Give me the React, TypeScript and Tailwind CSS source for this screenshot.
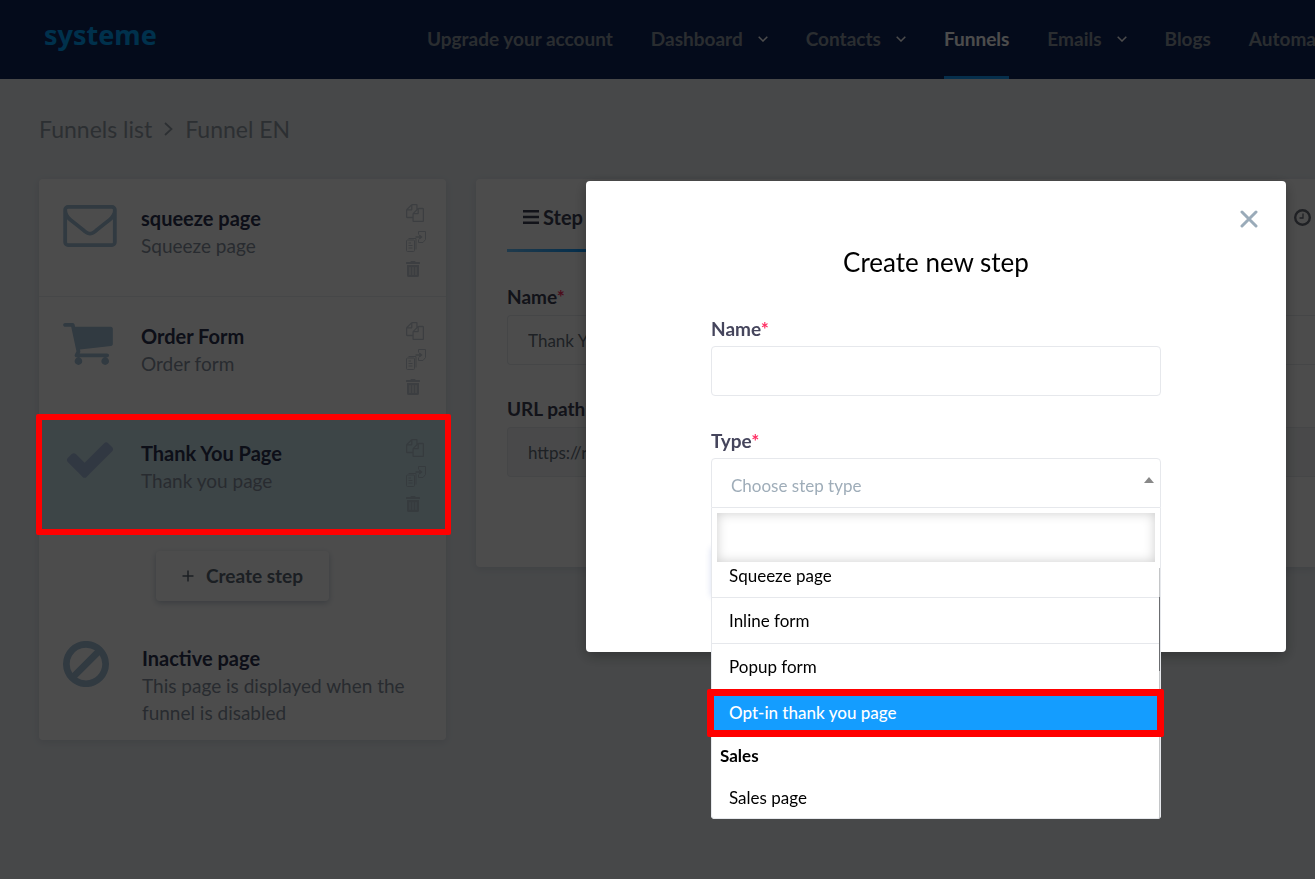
import { useState } from "react";
import { FaTrashAlt } from "react-icons/fa";

type StepIconName = "envelope" | "cart" | "check" | "ban";

interface FunnelStep {
  title: string;
  type: string;
  icon: StepIconName;
  selected?: boolean;
  divider?: boolean;
}

const NAV_ITEMS = [
  { label: "Upgrade your account" },
  { label: "Dashboard", menu: true },
  { label: "Contacts", menu: true },
  { label: "Funnels", active: true },
  { label: "Emails", menu: true },
  { label: "Blogs" },
  { label: "Automations" },
];

const STEPS: FunnelStep[] = [
  { title: "squeeze page", type: "Squeeze page", icon: "envelope", divider: true },
  { title: "Order Form", type: "Order form", icon: "cart" },
  { title: "Thank You Page", type: "Thank you page", icon: "check", selected: true },
];

const STEP_ICONS: Record<StepIconName, { viewBox: string; className: string; d: string }> = {
  envelope: {
    viewBox: "0 256 1792 1408",
    className: "h-[42px] w-[54px]",
    d: "M1664 1504v-768q-32 36-69 66-268 206-426 338-51 43-83 67t-86.5 48.5-102.5 24.5h-2q-48 0-102.5-24.5t-86.5-48.5-83-67q-158-132-426-338-37-30-69-66v768q0 13 9.5 22.5t22.5 9.5h1472q13 0 22.5-9.5t9.5-22.5zm0-1051v-24.5l-.5-13-3-12.5-5.5-9-9-7.5-14-2.5h-1472q-13 0-22.5 9.5t-9.5 22.5q0 168 147 284 193 152 401 317 6 5 35 29.5t46 37.5 44.5 31.5 50.5 27.5 43 9h2q20 0 43-9t50.5-27.5 44.5-31.5 46-37.5 35-29.5q208-165 401-317 54-43 100.5-115.5t46.5-131.5zm128-37v1088q0 66-47 113t-113 47h-1472q-66 0-113-47t-47-113v-1088q0-66 47-113t113-47h1472q66 0 113 47t47 113z",
  },
  cart: {
    viewBox: "64 256 1664 1408",
    className: "h-[42px] w-[50px]",
    d: "M704 1536q0 52-38 90t-90 38-90-38-38-90 38-90 90-38 90 38 38 90zm896 0q0 52-38 90t-90 38-90-38-38-90 38-90 90-38 90 38 38 90zm128-1088v512q0 24-16.5 42.5t-40.5 21.5l-1044 122q13 60 13 70 0 16-24 64h920q26 0 45 19t19 45-19 45-45 19h-1024q-26 0-45-19t-19-45q0-11 8-31.5t16-36 21.5-40 15.5-29.5l-177-823h-204q-26 0-45-19t-19-45 19-45 45-19h256q16 0 28.5 6.5t19.5 15.5 13 24.5 8 26 5.5 29.5 4.5 26h1201q26 0 45 19t19 45z",
  },
  check: {
    viewBox: "0 256 1792 1408",
    className: "h-[42px] w-[54px]",
    d: "M1671 566q0 40-28 68l-724 724-136 136q-28 28-68 28t-68-28l-136-136-362-362q-28-28-28-68t28-68l136-136q28-28 68-28t68 28l294 295 656-657q28-28 68-28t68 28l136 136q28 28 28 68z",
  },
  ban: {
    viewBox: "128 125 1536 1536",
    className: "h-[46px] w-[46px]",
    d: "M1440 893q0-161-87-295l-754 753q137 89 297 89 111 0 211.5-43.5t173.5-116.5 116-174.5 43-212.5zm-999 299l755-754q-135-91-300-91-148 0-273 73t-198 199-73 274q0 162 89 299zm1223-299q0 157-61 300t-163.5 246-245 164-298.5 61-298.5-61-245-164-163.5-246-61-300 61-299.5 163.5-245.5 245-164 298.5-61 298.5 61 245 164 163.5 245.5 61 299.5z",
  },
};

function StepIcon({ name }: { name: StepIconName }) {
  const icon = STEP_ICONS[name];
  return (
    <svg viewBox={icon.viewBox} className={icon.className} fill="currentColor" aria-hidden="true">
      <path d={icon.d} />
    </svg>
  );
}

function CopyIcon() {
  return (
    <svg viewBox="0 0 1792 1792" className="h-[18px] w-[18px]" fill="currentColor" aria-hidden="true">
      <path d="M1696 384q40 0 68 28t28 68v1216q0 40-28 68t-68 28h-960q-40 0-68-28t-28-68v-288h-544q-40 0-68-28t-28-68v-672q0-40 20-88t48-76l408-408q28-28 76-48t88-20h416q40 0 68 28t28 68v328q68-40 128-40h416zm-544 213l-299 299h299v-299zm-640-384l-299 299h299v-299zm196 647l316-316v-416h-384v416q0 40-28 68t-68 28h-416v640h512v-256q0-40 20-88t48-76zm956 804v-1152h-384v416q0 40-28 68t-68 28h-416v640h896z" />
    </svg>
  );
}

function MoveIcon() {
  return (
    <svg viewBox="0 0 20 21" className="h-[21px] w-5" fill="none" stroke="currentColor" aria-hidden="true">
      <path d="M12.5 3.5v-3h7v8l-2.500 3h-4.500v-3" />
      <path d="M9.500 6h5.500M13.200 4l2.300 2-2.300 2" strokeWidth="1.500" />
      <rect x=".5" y="9" width="8" height="11.500" rx="1" />
      <path d="M2.500 7.500h7.500v11M2.500 12h2.500M2.500 14.500h4M2.500 17h4" />
    </svg>
  );
}

function ChevronDown() {
  return (
    <svg viewBox="0 0 10 6" className="h-1.5 w-2.5" fill="none" stroke="currentColor" strokeWidth="1.5" aria-hidden="true">
      <path d="M.7.7 5 5 9.300.7" />
    </svg>
  );
}

function Required() {
  return <span className="text-[#ff2e63]">*</span>;
}

function Header() {
  return (
    <header className="flex h-[79px] items-stretch bg-[#10265c] pl-11">
      <a href="#home" className="w-[383px] shrink-0 pt-[17px] font-['Noto_Sans',sans-serif] text-[27px] leading-9 font-bold text-[#00a4ff]">
        systeme
      </a>
      <nav className="flex shrink-0 gap-[38px] text-[19px] font-bold whitespace-nowrap text-[#8d98a0]">
        {NAV_ITEMS.map((item) => (
          <a
            key={item.label}
            href="#nav"
            className={`flex items-center border-b-[3px] pt-0.5 ${item.active ? "border-[#149dff] text-white" : "border-transparent"}`}
          >
            {item.label}
            {item.menu ? (
              <span className="ml-[15px] text-white">
                <ChevronDown />
              </span>
            ) : null}
          </a>
        ))}
      </nav>
    </header>
  );
}

function StepRow({ step }: { step: FunnelStep }) {
  return (
    <li className={`relative ${step.divider ? "border-b border-[#e9edf2]" : ""} ${step.selected ? "bg-[#cde6ef]" : ""}`}>
      <div className="flex h-[117px] pt-[26px] pr-5 pl-6">
        <div className={`w-[78px] shrink-0 ${step.selected ? "text-[#a6bcdc]" : "text-[#a3c1d9]"}`}>
          <StepIcon name={step.icon} />
        </div>
        <div className="flex-1 leading-[27px]">
          <h2 className="text-[20px] font-bold text-[#2c3250]">{step.title}</h2>
          <p className="text-[19px] text-[#8892a0]">{step.type}</p>
        </div>
        <div className={`-mt-px flex w-5 flex-col items-start gap-[9px] ${step.selected ? "text-[#b4c5cf]" : "text-[#cad1d9]"}`}>
          <button type="button" aria-label={`Duplicate ${step.title}`}>
            <CopyIcon />
          </button>
          <button type="button" aria-label={`Move ${step.title}`}>
            <MoveIcon />
          </button>
          <button type="button" aria-label={`Delete ${step.title}`}>
            <FaTrashAlt className="h-4 w-3.5" />
          </button>
        </div>
      </div>
      {step.selected ? (
        <span className="pointer-events-none absolute top-0 -right-[5px] -bottom-1 -left-[3px] z-30 rounded-xs border-6 border-[#ff0000]" />
      ) : null}
    </li>
  );
}

function StepsPanel() {
  return (
    <aside className="w-[407px] shrink-0 self-start rounded bg-white pb-[14px] shadow-[0_2px_8px_rgba(60,90,130,0.15)]">
      <ul>
        {STEPS.map((step) => (
          <StepRow key={step.title} step={step} />
        ))}
      </ul>
      <div className="flex justify-center pt-5 pb-10">
        <button
          type="button"
          className="flex h-[50px] w-[173px] items-center justify-center gap-3 rounded text-[19px] font-bold text-[#5c6976] shadow-[0_2px_6px_rgba(50,80,120,0.3)]"
        >
          <svg viewBox="0 0 12 12" className="h-3 w-3" stroke="currentColor" strokeWidth="1.5" aria-hidden="true">
            <path d="M6 .5v11M.5 6h11" />
          </svg>
          Create step
        </button>
      </div>
      <div className="flex px-6">
        <div className="w-[79px] shrink-0 text-[#a3c1d9]">
          <StepIcon name="ban" />
        </div>
        <div className="pt-1 leading-[27px]">
          <h2 className="text-[20px] font-bold text-[#2c3250]">Inactive page</h2>
          <p className="text-[19px] text-[#8892a0]">This page is displayed when the funnel is disabled</p>
        </div>
      </div>
    </aside>
  );
}

function StepSettings() {
  return (
    <section className="h-[388px] flex-1 rounded-l bg-white pl-[31px] shadow-[0_2px_8px_rgba(60,90,130,0.15)]">
      <div className="flex h-[73px] items-stretch justify-between text-[20px] font-bold text-[#3c4156]">
        <button
          type="button"
          className="flex w-60 items-center gap-1 border-b-[3px] pt-[6px] pl-4 [border-image:linear-gradient(90deg,#6cc4ff,#149dff_30%)_1]"
        >
          <svg viewBox="0 0 16 14" className="h-3.5 w-4" fill="currentColor" aria-hidden="true">
            <path d="M0 0h16v2.500H0zM0 5.700h16v2.500H0zM0 11.400h16v2.500H0z" />
          </svg>
          Step
        </button>
        <button type="button" aria-label="Deadline" className="pt-[3px] pr-1 text-[#6a6e7a]">
          <svg viewBox="0 0 17 17" className="h-[17px] w-[17px]" fill="none" stroke="currentColor" aria-hidden="true">
            <circle cx="8.500" cy="8.500" r="7.300" strokeWidth="2.400" />
            <path d="M9 4.500V9H5.500" strokeWidth="1.300" />
          </svg>
        </button>
      </div>
      <div className="flex flex-col pt-[31px] text-[19px] leading-[27px]">
        <label htmlFor="step-name" className="mb-[5px] font-bold text-[#3c4156]">
          Name
          <Required />
        </label>
        <input
          id="step-name"
          defaultValue="Thank You Page"
          className="mb-[30px] h-[50px] rounded-l border border-r-0 border-[#e6eaee] px-5 text-[17px] text-[#66707c]"
        />
        <label htmlFor="step-path" className="mb-[5px] font-bold text-[#3c4156]">
          URL path
          <Required />
        </label>
        <input
          id="step-path"
          readOnly
          defaultValue="https://r"
          className="h-[50px] rounded-l border border-r-0 border-[#e6eaee] bg-[#f5f6f7] px-5 text-[17px] text-[#66707c]"
        />
      </div>
    </section>
  );
}

function StepTypeList() {
  return (
    <div className="absolute top-full right-0 left-0 rounded-b bg-white text-[17px] text-black">
      <div className="border-x border-[#e6e8ec] px-[5px] pt-[5px]">
        <input
          aria-label="Search step type"
          className="block h-[49px] w-full px-3 shadow-[inset_0_0_12px_rgba(0,0,0,0.2)] outline-none"
        />
      </div>
      <div className="flex rounded-b border-x border-b border-[#e6e8ec]">
        <ul role="listbox" aria-label="Step type" className="flex-1">
          <li role="option" aria-selected="false" className="flex h-9 items-center border-b border-[#e6e8ec] pb-2 pl-[17px]">
            Squeeze page
          </li>
          <li role="option" aria-selected="false" className="flex h-[46px] items-center border-b border-[#e6e8ec] pl-[17px]">
            Inline form
          </li>
          <li role="option" aria-selected="false" className="flex h-[46px] items-center pb-0.5 pl-[17px]">
            Popup form
          </li>
          <li role="option" aria-selected="true" className="relative flex h-[46px] items-center bg-[#149dff] pb-0.5 pl-[17px] font-medium text-white">
            Opt-in thank you page
            <span className="pointer-events-none absolute -top-px -right-[5px] -bottom-px -left-[5px] rounded-xs border-[7px] border-[#ff0000]" />
          </li>
          <li role="presentation" className="flex h-10 items-center pb-0.5 pl-2 font-bold">
            Sales
          </li>
          <li role="option" aria-selected="false" className="flex h-[42px] items-center pl-[17px]">
            Sales page
          </li>
        </ul>
        <div className="mt-1.5 w-px bg-[#c4c6c8] pt-[29px]">
          <div className="h-[74px] bg-[#6b6d70]" />
        </div>
      </div>
    </div>
  );
}

function CreateStepDialog() {
  const [name, setName] = useState("");

  return (
    <div className="fixed inset-0 z-20 flex items-start justify-end pt-[181px] pr-[29px]">
      <form
        role="dialog"
        aria-labelledby="dialog-title"
        className="relative w-[700px] rounded bg-white px-[125px] pt-[63px] pb-[57px] shadow-[0_4px_14px_rgba(0,0,0,0.3)]"
      >
        <button type="button" aria-label="Close" className="absolute top-[29px] right-7 text-[#9aabb9]">
          <svg viewBox="0 0 18 18" className="h-[18px] w-[18px]" stroke="currentColor" strokeWidth="3" strokeLinecap="round" aria-hidden="true">
            <path d="m2 2 14 14M16 2 2 16" />
          </svg>
        </button>
        <h1 id="dialog-title" className="mb-[35px] text-center text-[26px] leading-9 text-black">
          Create new step
        </h1>
        <div className="flex flex-col text-[19px] leading-[27px]">
          <label htmlFor="new-step-name" className="mb-1 font-bold text-[#45455c]">
            Name
            <Required />
          </label>
          <input
            id="new-step-name"
            value={name}
            onChange={(event) => setName(event.target.value)}
            className="mb-[31px] h-[50px] rounded border border-[#e6e8ec] px-5 text-[17px]"
          />
          <label htmlFor="new-step-type" className="mb-1 font-bold text-[#45455c]">
            Type
            <Required />
          </label>
          <div className="relative z-10">
            <select
              id="new-step-type"
              className="block h-[50px] w-full appearance-none rounded-t border border-[#e6e8ec] bg-white pt-1 pl-[19px] text-[17px] text-[#9fadb9]"
            >
              <option>Choose step type</option>
            </select>
            <svg viewBox="0 0 10 6" className="pointer-events-none absolute top-[19px] right-[7px] h-1.5 w-2.5" fill="#888" aria-hidden="true">
              <path d="M5 0l5 6H0z" />
            </svg>
            <StepTypeList />
          </div>
        </div>
        <button
          type="submit"
          aria-label="Create"
          className="mt-[37px] block h-[50px] w-[200px] rounded shadow-[0_2px_6px_rgba(50,80,180,0.2)]"
        />
      </form>
    </div>
  );
}

export default function App() {
  return (
    <div className="min-h-screen overflow-hidden bg-[#eef2f5] font-[Lato,sans-serif]">
      <Header />
      <main className="pt-8 pl-[39px]">
        <nav aria-label="Breadcrumb" className="mb-8 flex items-center gap-3 text-[23px] leading-9 text-[#959fa9]">
          <a href="#funnels">Funnels list</a>
          <svg viewBox="0 0 9 14" className="h-3.5 w-[9px]" fill="none" stroke="currentColor" strokeWidth="1.8" aria-hidden="true">
            <path d="m1 1 6.500 6L1 13" />
          </svg>
          <span>Funnel EN</span>
        </nav>
        <div className="flex items-start gap-[30px]">
          <StepsPanel />
          <StepSettings />
        </div>
      </main>
      <div className="fixed inset-0 z-10 bg-black/70" />
      <CreateStepDialog />
    </div>
  );
}
